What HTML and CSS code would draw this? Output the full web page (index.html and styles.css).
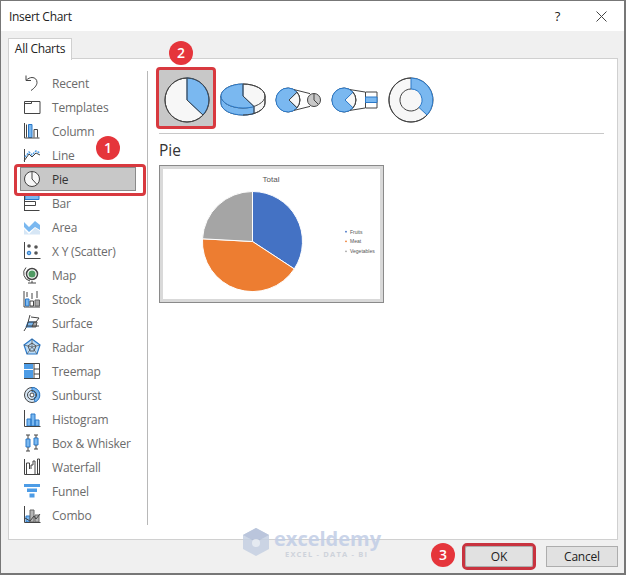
FILE: index.html
```html
<!DOCTYPE html>
<html lang="en">
<head>
<meta charset="utf-8">
<title>Insert Chart</title>
<link rel="stylesheet" href="styles.css">
</head>
<body>
<div class="window">
  <header class="titlebar">
    <span class="title">Insert Chart</span>
    <span class="help">?</span>
    <svg class="close" width="11" height="11" viewBox="0 0 11 11"><path d="M.5.5l10 10M10.500.5l-10 10" class="ln"/></svg>
  </header>
  <div class="tabs"><div class="tab">All Charts</div></div>
  <main class="panel">
    <nav class="list">
      <div class="item"><svg width="18" height="18" viewBox="0 0 18 18"><path class="ln" d="M3 1.500v5h5M3 6.500c2-2 4-3 6-3 3 0 5 2 5 5 0 3-3 6-6 8"/></svg><span>Recent</span></div>
      <div class="item"><svg width="18" height="18" viewBox="0 0 18 18"><path class="ln" d="M1.500 3.500h15.500v12H1.500zM1.500 5.500h7M8.500 3.500v2"/></svg><span>Templates</span></div>
      <div class="item"><svg width="18" height="18" viewBox="0 0 18 18"><path class="bl" d="M5.500 2.500h3.500v13H5.500z"/><path class="ln" d="M1.500 1v15h15M3.500 2.500v13M11 7.500h3.500v8M11 7.500v8"/></svg><span>Column</span></div>
      <div class="item"><svg width="18" height="18" viewBox="0 0 18 18"><path class="ln" d="M1.500 3v13"/><path class="ln" d="M1 15l5-7 3 3 4-4 4 2"/><path class="blue" d="M2 11l4-5 3 3 4-4 4 2"/></svg><span>Line</span></div>
      <div class="item on"><svg width="18" height="18" viewBox="0 0 18 18"><circle class="wh" cx="9" cy="9" r="7.500"/><path class="ln" d="M9 1.500V9l5 5.500"/></svg><span>Pie</span></div>
      <div class="item"><svg width="18" height="18" viewBox="0 0 18 18"><path class="bl" d="M2 1.500h14v4H2z"/><path class="ln" d="M1.500 0v17M1.500 7.500h11v4h-11M1.500 16.500h15"/></svg><span>Bar</span></div>
      <div class="item"><svg width="18" height="18" viewBox="0 0 18 18"><path d="M1 4l5 5 6-6 5 4v5l-5-3-6 5-5-5z" fill="#7ab8f0"/><path d="M1 11l5 5 6-6 5 3v3.500H1z" fill="#d6e6f5"/></svg><span>Area</span></div>
      <div class="item"><svg width="18" height="18" viewBox="0 0 18 18"><path class="ln" d="M1.500 0v16.500h16"/><circle cx="6" cy="4" r="1.800" fill="#555"/><circle cx="13" cy="5" r="1.800" fill="#555"/><circle class="bl" cx="6" cy="11" r="1.800"/><circle cx="13" cy="11" r="1.800" fill="#555"/></svg><span>X Y (Scatter)</span></div>
      <div class="item"><svg width="18" height="18" viewBox="0 0 18 18"><circle cx="9" cy="8" r="5.500" fill="#fff" stroke="#444" stroke-width="1.500"/><circle cx="9" cy="8" r="3.500" fill="#4f9a63"/><path class="ln" d="M3 1.500a8 8 0 0 0 4 13.500M9 15v2M5 17h8"/></svg><span>Map</span></div>
      <div class="item"><svg width="18" height="18" viewBox="0 0 18 18"><path class="bl" d="M2.500 9h3.500v7H2.500z"/><path d="M12 10h4.500v6H12z" fill="#aaa" stroke="#666"/><path class="ln" d="M1 1v16h16M7 11h3.500v5H7zM4 2v5M9 3v6M14 1v7"/></svg><span>Stock</span></div>
      <div class="item"><svg width="18" height="18" viewBox="0 0 18 18"><path class="bl" d="M5 8h6l-2 5H3z"/><path d="M11 8h3l-1 5H9z" fill="#aaa" stroke="#555"/><path class="ln" d="M1 17l3-5M7 1L4 12h12M8 3l8 1-3 4H5"/></svg><span>Surface</span></div>
      <div class="item"><svg width="18" height="18" viewBox="0 0 18 18"><path d="M9 1l8 6-3 9H4L1 7z" fill="#bcdcf7" stroke="#2a78c8" stroke-width="1.200"/><path d="M9 5l4 3-2 5H7L5 8z" fill="none" stroke="#555"/><path d="M9 1v8M1 7l8 2 8-2M4 16l5-7 5 7" fill="none" stroke="#555" stroke-width=".7"/></svg><span>Radar</span></div>
      <div class="item"><svg width="18" height="18" viewBox="0 0 18 18"><path d="M1 1h9v6H1zM1 8h9v9H1z" fill="#4d9ce6"/><path class="ln" d="M11 1.500h5.500v15H11zM11 7h5.500M11 12h5.500M1 1.500h15.500M1 16.500h15.500"/></svg><span>Treemap</span></div>
      <div class="item"><svg width="18" height="18" viewBox="0 0 18 18"><circle cx="9" cy="9" r="7.500" fill="#d6e6f5" stroke="#444"/><path class="bl" d="M9 1.500a7.500 7.500 0 0 1 3 14.500L11 12a3.500 3.500 0 0 0-2-6.500z"/><circle cx="9" cy="9" r="4.500" fill="none" stroke="#444"/><circle cx="9" cy="9" r="2" fill="#fff" stroke="#444"/></svg><span>Sunburst</span></div>
      <div class="item"><svg width="18" height="18" viewBox="0 0 18 18"><path class="bl" d="M4 9h4v7H4zM8 4h4v12H8zM12 10h4v6h-4z"/><path class="ln" d="M1.500 0v16.500h16"/></svg><span>Histogram</span></div>
      <div class="item"><svg width="18" height="18" viewBox="0 0 18 18"><path class="bl" d="M3 5h4v8H3zM11 4h4v7h-4z"/><path class="ln" d="M5 1v4M5 13v4M3 1h4M3 17h4M13 1v3M13 11v4M11 1h4M11 15h4"/></svg><span>Box &amp; Whisker</span></div>
      <div class="item"><svg width="18" height="18" viewBox="0 0 18 18"><path class="ln" d="M1.500 1v15.500h15.500M3.500 16V5h3v6M8 11V7h2V5M10 5V3h2v13M14.500 1v15h2V1z"/></svg><span>Waterfall</span></div>
      <div class="item"><svg width="18" height="18" viewBox="0 0 18 18"><path d="M1 2h16v3H1zM4 6.500h10v3.500H4zM6.500 11.500h5v4h-5z" fill="#4d9ce6"/></svg><span>Funnel</span></div>
      <div class="item"><svg width="18" height="18" viewBox="0 0 18 18"><path class="bl" d="M3 10h4v6H3z"/><path d="M7 4h4v12H7zM12 9h4v7h-4z" fill="#b5b5b5" stroke="#666"/><path class="ln" d="M1.500 0v16.500h16M2 12l5 3 4-5 2 3 4-5"/></svg><span>Combo</span></div>
    </nav>
    <section class="detail">
      <div class="types">
        <svg class="type sel" width="56" height="58" viewBox="0 0 56 58"><circle class="wh" cx="28" cy="30" r="22"/><path class="bl" d="M28 8a22 22 0 0 1 16 37L28 30z"/><circle class="ln" cx="28" cy="30" r="22"/><path class="ln" d="M28 8v22l16 15"/></svg>
        <svg class="type" width="56" height="58" viewBox="0 0 56 58"><path class="wh" d="M6 26v7c0 7 10 12 22 12s22-5 22-12v-7z"/><path class="bl" d="M6 26v7c0 7 10 12 22 12 3 0 7-.3 11-1.300V36L28 26z"/><ellipse class="wh" cx="28" cy="26" rx="22" ry="12"/><path class="bl" d="M28 14C16 14 6 19.500 6 26s10 12 22 12c4 0 8-.5 11-1.500L28 26z"/><path class="ln" d="M28 14c12 0 22 5.500 22 12v7c0 7-10 12-22 12M28 14v12l11 10.500v7.500"/></svg>
        <svg class="type" width="56" height="58" viewBox="0 0 56 58"><circle class="wh" cx="17" cy="30" r="12"/><path class="bl" d="M26 22.200a12 12 0 1 0 0 15.600l-8-7.800z"/><path class="ln" d="M23 19.600l16 4M23 40.400l16-4"/><path class="ln" d="M26 22.200a12 12 0 0 1 0 15.600l-8-7.800z"/><circle cx="43" cy="30" r="6.500" fill="#c8c8c8" stroke="#444"/><path class="ln" d="M43 23.500V30l4 4"/></svg>
        <svg class="type" width="56" height="58" viewBox="0 0 56 58"><circle class="wh" cx="17" cy="30" r="12"/><path class="bl" d="M26 22.200a12 12 0 1 0 0 15.600l-8-7.800z"/><path class="ln" d="M23 19.600l15 2.400M23 40.400l15-2.400M26 22.200a12 12 0 0 1 0 15.600M38.500 22h11.500v16H38.500z"/><path class="bl" d="M38.500 27h11.500v5.500H38.500z"/></svg>
        <svg class="type" width="56" height="58" viewBox="0 0 56 58"><circle class="wh" cx="28" cy="30" r="22"/><path class="bl" d="M28 8a22 22 0 0 1 16 37l-8-7.500A11 11 0 0 0 28 19z"/><path class="ln" d="M28 8a22 22 0 1 0 16 37M28 19a11 11 0 1 0 8 18.500"/></svg>
      </div>
      <h2 class="name">Pie</h2>
      <div class="preview">
        <svg width="217" height="130" viewBox="0 0 217 130">
          <text class="ptitle" x="108" y="13">Total</text>
          <g transform="translate(89.500 72.500)">
            <path fill="#4472c4" stroke="#fff" d="M0-50A50 50 0 0 1 41.800 27.400L0 0z"/>
            <path fill="#ed7d31" stroke="#fff" d="M41.800 27.400A50 50 0 0 1-50-2.700L0 0z"/>
            <path fill="#a5a5a5" stroke="#fff" d="M-50-2.700A50 50 0 0 1 0-50L0 0z"/>
          </g>
          <circle cx="183" cy="62.700" r=".9" fill="#4472c4"/><text class="leg" x="187" y="64.500">Fruits</text>
          <circle cx="183" cy="72.300" r=".9" fill="#ed7d31"/><text class="leg" x="187" y="74">Meat</text>
          <circle cx="183" cy="82.300" r=".9" fill="#a5a5a5"/><text class="leg" x="187" y="84">Vegetables</text>
        </svg>
      </div>
    </section>
  </main>
  <footer class="footer">
    <button class="btn ok">OK</button>
    <button class="btn">Cancel</button>
  </footer>
  <div class="mark">
    <svg width="30" height="30" viewBox="0 0 30 30"><path d="M15 1l13 7v14l-13 7-13-7V8z" fill="#c5d0e2"/><path d="M15 1l13 7-13 7-13-7z" fill="#aebcd6"/><circle cx="15" cy="16" r="4" fill="#e4e9f2"/></svg>
    <div class="marktext"><b>exceldemy</b><small>EXCEL - DATA - BI</small></div>
  </div>
  <div class="hl hl-pie"></div>
  <div class="hl hl-type"></div>
  <span class="badge b1">1</span>
  <span class="badge b2">2</span>
  <span class="badge b3">3</span>
</div>
</body>
</html>
```
FILE: styles.css
```css
* { box-sizing: border-box; }
html, body { margin: 0; padding: 0; }
body { width: 626px; height: 575px; overflow: hidden; font-family: "Open Sans", "Liberation Sans", sans-serif; }
.window { position: relative; width: 626px; height: 575px; background: #f0f0f0; border: 1px solid #777; border-width: 1px 2px 2px 1px; display: flex; flex-direction: column; }
.titlebar { height: 30px; background: #fff; display: flex; align-items: center; padding: 0 17px 0 8px; font-size: 12px; color: #222; letter-spacing: -.3px; }
.title { flex: 1; }
.help { font-size: 13px; margin-right: 36px; }
.ln { fill: none; stroke: #444; stroke-width: 1; }
.wh { fill: #f7f7f7; stroke: #444; stroke-width: 1; }
.bl { fill: #7ab8f0; stroke: #2a78c8; stroke-width: 1; }
.blue { fill: none; stroke: #4d9ce6; stroke-width: 1.500; stroke-dasharray: 2 1; }
.tabs { height: 28px; padding: 7px 0 0 7px; display: flex; }
.tab { width: 64px; height: 22px; background: #fff; border: 1px solid #d0d0d0; border-bottom: 0; font-size: 12px; letter-spacing: -.3px; color: #222; text-align: center; line-height: 20px; position: relative; z-index: 1; }
.panel { margin: -1px 6px 0 7px; height: 482px; background: #fff; border: 1px solid #d0d0d0; display: flex; padding: 12px 0 14px; }
.list { width: 139px; border-right: 1px solid #b8b8b8; padding-left: 11px; }
.item { height: 24px; width: 116px; display: flex; align-items: center; gap: 11px; padding-left: 3px; font-size: 12px; letter-spacing: -.2px; color: #6b6b6b; white-space: nowrap; }
.item svg { flex: none; }
.item.on { background: #c8c8c8; border: 1px solid #8a8a8a; padding-left: 2px; color: #333; }
.detail { flex: 1; padding: 0 13px 0 11px; margin-top: -1px; }
.types { display: flex; height: 64px; border-bottom: 1px solid #c8c8c8; align-items: flex-start; }
.type { flex: none; }
.type.sel { background: #c8c8c8; }
.name { margin: 5px 0 4px; font-size: 15.500px; font-weight: 400; color: #333; line-height: 22px; }
.preview { width: 225px; height: 138px; border: 1px solid #8a8a8a; background: #fff; padding: 0; outline: 3px solid #d9d9d9; outline-offset: -4px; }
.preview svg { display: block; margin: 3px; }
.ptitle { font-size: 8px; fill: #555; text-anchor: middle; font-family: "Liberation Sans", sans-serif; }
.leg { font-size: 5px; fill: #555; font-family: "Liberation Sans", sans-serif; }
.footer { flex: 1; display: flex; justify-content: flex-end; align-items: center; gap: 13px; padding: 0 6px 1px 0; }
.btn { width: 72px; height: 21px; background: #e1e1e1; border: 1px solid #adadad; font: 12px "Open Sans", sans-serif; letter-spacing: -.2px; color: #222; padding: 0; }
.mark { position: absolute; left: 240px; top: 526px; display: flex; gap: 3px; opacity: .85; }
.marktext { display: flex; flex-direction: column; font-family: "Open Sans", sans-serif; color: #c1cde6; line-height: 1; }
.marktext b { font-size: 20px; line-height: 20px; letter-spacing: 0; font-weight: 700; margin-top: 2px; }
.marktext small { font-size: 7.500px; line-height: 8px; font-weight: 700; color: #c9ced8; letter-spacing: 1.200px; margin: 1px 0 0 11px; }
.hl { position: absolute; border: 3px solid #d8393f; border-radius: 4px; }
.hl-pie { left: 13px; top: 163px; width: 132px; height: 32px; }
.hl-type { left: 155px; top: 66px; width: 60px; height: 62px; }
.btn.ok { outline: 3px solid #c8333f; outline-offset: 0; border-radius: 2px; width: 68px; }
.badge { position: absolute; width: 24px; height: 24px; border-radius: 50%; background: #e5353b; color: #fff; font-size: 14px; font-weight: 600; text-align: center; line-height: 24px; }
.b1 { left: 95px; top: 135px; }
.b2 { left: 168px; top: 40px; }
.b3 { left: 430px; top: 542px; }
```
